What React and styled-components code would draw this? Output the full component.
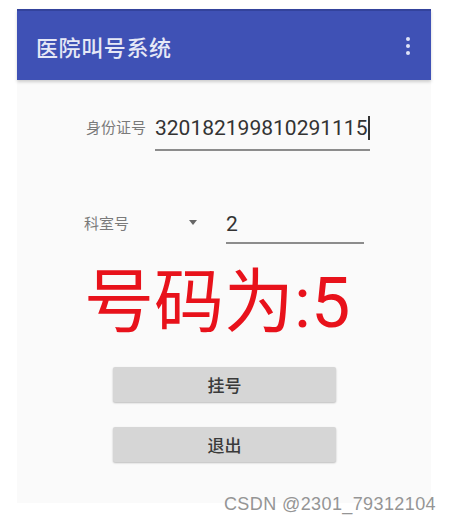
import React from "react"
import styled, { createGlobalStyle } from "styled-components"

const GlobalStyle = createGlobalStyle`
  body {
    margin: 0;
    background: #ffffff;
    font-family: Roboto, "Noto Sans CJK SC", sans-serif;
  }
`

const Page = styled.div`
  position: relative;
  width: 452px;
  height: 528px;
  padding: 9px 0 0 17px;
  box-sizing: border-box;
`

const Screen = styled.div`
  width: 414px;
  height: 494px;
  background: #fafafa;
  display: flex;
  flex-direction: column;
`

const AppBar = styled.div`
  height: 71px;
  flex-shrink: 0;
  background: #3f51b5;
  border-top: 2px solid #33439c;
  box-sizing: border-box;
  display: flex;
  align-items: center;
  justify-content: space-between;
  padding: 0 21px 0 19px;
  box-shadow: 0 2px 3px rgba(0, 0, 0, 0.18);
`

const Title = styled.div`
  color: #e6e8f6;
  font-size: 22px;
  font-weight: 500;
  letter-spacing: 0.6px;
`

const Dots = styled.div`
  display: flex;
  flex-direction: column;
  gap: 3px;

  & span {
    width: 4px;
    height: 4px;
    border-radius: 50%;
    background: #dfe3f7;
  }
`

const Content = styled.div`
  display: flex;
  flex-direction: column;
  padding-top: 35px;
`

const Row = styled.div`
  display: flex;
  align-items: flex-end;
  padding-left: ${(p) => p.$indent}px;
  margin-bottom: ${(p) => p.$gap || 0}px;
`

const Label = styled.div`
  font-size: 15px;
  color: #7a7a7a;
  width: ${(p) => p.$width}px;
  margin-bottom: ${(p) => p.$lift}px;
`

const Field = styled.div`
  width: ${(p) => p.$width}px;
  font-size: 21px;
  color: #333;
  border-bottom: 2px solid #8c8c8c;
  padding-bottom: ${(p) => p.$pad}px;
  line-height: 26px;
  display: flex;
  align-items: center;
`

const Cursor = styled.span`
  display: inline-block;
  width: 1.5px;
  height: 24px;
  background: #333;
  margin-left: 1px;
`

const Spinner = styled.div`
  display: flex;
  align-items: center;
  width: 142px;
  margin-bottom: 11px;

  & span {
    font-size: 15px;
    color: #7a7a7a;
    flex: 1;
  }
`

const Arrow = styled.div`
  width: 0;
  height: 0;
  border-left: 4px solid transparent;
  border-right: 4px solid transparent;
  border-top: 5px solid #666;
  margin-right: 29px;
`

const Result = styled.div`
  font-size: 70px;
  line-height: 1;
  color: #e8121b;
  padding-left: 67px;
  margin-top: 24px;
`

const Buttons = styled.div`
  display: flex;
  flex-direction: column;
  align-items: flex-start;
  gap: 25px;
  padding-left: 96px;
  margin-top: 29px;
`

const Button = styled.div`
  width: 223px;
  height: 35px;
  background: #d6d6d6;
  border-radius: 2px;
  box-shadow: 0 1px 2px rgba(0, 0, 0, 0.25);
  display: flex;
  align-items: center;
  justify-content: center;
  font-size: 17px;
  font-weight: 500;
  color: #3a3a3a;
`

const Watermark = styled.div`
  position: absolute;
  right: 16px;
  top: 494px;
  font-family: "Liberation Sans", Arial, sans-serif;
  font-size: 18px;
  color: #959595;
  letter-spacing: 0.4px;
`

export default function App() {
  return (
    <>
      <GlobalStyle />
      <Page>
        <Screen>
          <AppBar>
            <Title>医院叫号系统</Title>
            <Dots>
              <span />
              <span />
              <span />
            </Dots>
          </AppBar>
          <Content>
            <Row $indent={69} $gap={60}>
              <Label $width={69} $lift={14}>身份证号</Label>
              <Field $width={215} $pad={8}>
                320182199810291115
                <Cursor />
              </Field>
            </Row>
            <Row $indent={67}>
              <Spinner>
                <span>科室号</span>
                <Arrow />
              </Spinner>
              <Field $width={138} $pad={5}>2</Field>
            </Row>
            <Result>号码为:5</Result>
            <Buttons>
              <Button>挂号</Button>
              <Button>退出</Button>
            </Buttons>
          </Content>
        </Screen>
        <Watermark>CSDN @2301_79312104</Watermark>
      </Page>
    </>
  )
}
